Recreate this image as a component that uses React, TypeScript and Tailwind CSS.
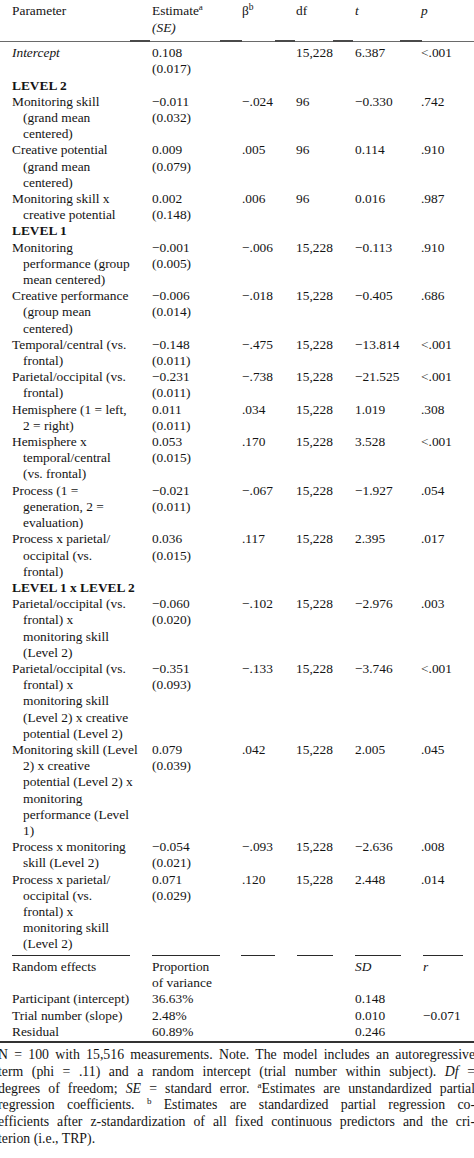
import React from "react";

type Row =
  | { kind: "section"; label: string }
  | {
      kind: "data";
      param: string[];
      italic?: boolean;
      est: string;
      se: string;
      beta: string;
      df: string;
      t: string;
      p: string;
    };

const M = "\u2212";

const rows: Row[] = [
  { kind: "data", param: ["Intercept"], italic: true, est: "0.108", se: "(0.017)", beta: "", df: "15,228", t: "6.387", p: "<.001" },
  { kind: "section", label: "LEVEL 2" },
  { kind: "data", param: ["Monitoring skill", "(grand mean", "centered)"], est: `${M}0.011`, se: "(0.032)", beta: `${M}.024`, df: "96", t: `${M}0.330`, p: ".742" },
  { kind: "data", param: ["Creative potential", "(grand mean", "centered)"], est: "0.009", se: "(0.079)", beta: ".005", df: "96", t: "0.114", p: ".910" },
  { kind: "data", param: ["Monitoring skill x", "creative potential"], est: "0.002", se: "(0.148)", beta: ".006", df: "96", t: "0.016", p: ".987" },
  { kind: "section", label: "LEVEL 1" },
  { kind: "data", param: ["Monitoring", "performance (group", "mean centered)"], est: `${M}0.001`, se: "(0.005)", beta: `${M}.006`, df: "15,228", t: `${M}0.113`, p: ".910" },
  { kind: "data", param: ["Creative performance", "(group mean", "centered)"], est: `${M}0.006`, se: "(0.014)", beta: `${M}.018`, df: "15,228", t: `${M}0.405`, p: ".686" },
  { kind: "data", param: ["Temporal/central (vs.", "frontal)"], est: `${M}0.148`, se: "(0.011)", beta: `${M}.475`, df: "15,228", t: `${M}13.814`, p: "<.001" },
  { kind: "data", param: ["Parietal/occipital (vs.", "frontal)"], est: `${M}0.231`, se: "(0.011)", beta: `${M}.738`, df: "15,228", t: `${M}21.525`, p: "<.001" },
  { kind: "data", param: ["Hemisphere (1 = left,", "2 = right)"], est: "0.011", se: "(0.011)", beta: ".034", df: "15,228", t: "1.019", p: ".308" },
  { kind: "data", param: ["Hemisphere x", "temporal/central", "(vs. frontal)"], est: "0.053", se: "(0.015)", beta: ".170", df: "15,228", t: "3.528", p: "<.001" },
  { kind: "data", param: ["Process (1 =", "generation, 2 =", "evaluation)"], est: `${M}0.021`, se: "(0.011)", beta: `${M}.067`, df: "15,228", t: `${M}1.927`, p: ".054" },
  { kind: "data", param: ["Process x parietal/", "occipital (vs.", "frontal)"], est: "0.036", se: "(0.015)", beta: ".117", df: "15,228", t: "2.395", p: ".017" },
  { kind: "section", label: "LEVEL 1 x LEVEL 2" },
  { kind: "data", param: ["Parietal/occipital (vs.", "frontal) x", "monitoring skill", "(Level 2)"], est: `${M}0.060`, se: "(0.020)", beta: `${M}.102`, df: "15,228", t: `${M}2.976`, p: ".003" },
  { kind: "data", param: ["Parietal/occipital (vs.", "frontal) x", "monitoring skill", "(Level 2) x creative", "potential (Level 2)"], est: `${M}0.351`, se: "(0.093)", beta: `${M}.133`, df: "15,228", t: `${M}3.746`, p: "<.001" },
  { kind: "data", param: ["Monitoring skill (Level", "2) x creative", "potential (Level 2) x", "monitoring", "performance (Level", "1)"], est: "0.079", se: "(0.039)", beta: ".042", df: "15,228", t: "2.005", p: ".045" },
  { kind: "data", param: ["Process x monitoring", "skill (Level 2)"], est: `${M}0.054`, se: "(0.021)", beta: `${M}.093`, df: "15,228", t: `${M}2.636`, p: ".008" },
  { kind: "data", param: ["Process x parietal/", "occipital (vs.", "frontal) x", "monitoring skill", "(Level 2)"], est: "0.071", se: "(0.029)", beta: ".120", df: "15,228", t: "2.448", p: ".014" },
];

const grid = "grid grid-cols-[140px_90px_54px_59px_66px_1fr] pl-[12px]";

function Lines({ lines, italic }: { lines: string[]; italic?: boolean }) {
  return (
    <div className={italic ? "italic" : ""}>
      {lines.map((l, i) => (
        <div key={i} className={`whitespace-nowrap ${i > 0 ? "pl-[11px]" : ""}`}>
          {l}
        </div>
      ))}
    </div>
  );
}

export default function App() {
  const headerSegs: [number, boolean][] = [
    [130, false],
    [20, true],
    [70, false],
    [22, true],
    [33, false],
    [20, true],
    [38, false],
    [20, true],
    [47, false],
    [22, true],
    [52, false],
  ];
  const bottomSegs = [118, 68, 34, 36, 46, 40];
  const segOffsets = [0, 0, -1, 1, 0, 2];

  return (
    <div
      className="w-[474px] min-h-[1158px] overflow-hidden bg-white text-[#141414]"
      style={{ fontFamily: '"Liberation Serif", "Times New Roman", serif' }}
    >
      <div className="text-[13.4px] leading-[16.2px] pt-[3px]">
        {/* Header */}
        <div className={grid}>
          <div>Parameter</div>
          <div>
            <div>
              Estimate<span className="text-[9px] leading-none align-[5px]">a</span>
            </div>
            <div className="italic leading-[17px]">(SE)</div>
          </div>
          <div>
            β<span className="text-[9.5px] leading-none align-[5px]">b</span>
          </div>
          <div>df</div>
          <div className="italic">t</div>
          <div className="italic">p</div>
        </div>
        {/* header rule */}
        <div className="flex items-center h-[2px] mt-[4px]">
          {headerSegs.map(([w, dark], i) => (
            <div
              key={i}
              style={{ width: w }}
              className={dark ? "h-[2px] bg-[#4a4a4a]" : "h-[1px] bg-[#6a6a6a]"}
            />
          ))}
        </div>
        <div className="pt-[3px]">
          {rows.map((r, i) =>
            r.kind === "section" ? (
              <div key={i} className={grid}>
                <div className="font-bold whitespace-nowrap col-span-6">{r.label}</div>
              </div>
            ) : (
              <div key={i} className={grid}>
                <Lines lines={r.param} italic={r.italic} />
                <div>
                  <div>{r.est}</div>
                  <div>{r.se}</div>
                </div>
                <div>{r.beta}</div>
                <div>{r.df}</div>
                <div>{r.t}</div>
                <div>{r.p}</div>
              </div>
            )
          )}
        </div>
        {/* segmented rule */}
        <div className={`${grid} mt-[2px] mb-[3px]`}>
          {bottomSegs.map((w, i) => (
            <div key={i} style={{ marginLeft: segOffsets[i] }}>
              <div style={{ width: w }} className="h-[1.5px] bg-[#2a2a2a]" />
            </div>
          ))}
        </div>
        {/* random effects */}
        <div className={grid}>
          <div className="whitespace-nowrap">Random effects</div>
          <div>
            <div>Proportion</div>
            <div>of variance</div>
          </div>
          <div />
          <div />
          <div className="italic">SD</div>
          <div className="italic pl-[2px]">r</div>
        </div>
        <div className={grid}>
          <div className="whitespace-nowrap">Participant (intercept)</div>
          <div>36.63%</div>
          <div />
          <div />
          <div>0.148</div>
          <div />
        </div>
        <div className={grid}>
          <div className="whitespace-nowrap">Trial number (slope)</div>
          <div>2.48%</div>
          <div />
          <div />
          <div>0.010</div>
          <div className="pl-[2px]">{M}0.071</div>
        </div>
        <div className={grid}>
          <div>Residual</div>
          <div>60.89%</div>
          <div />
          <div />
          <div>0.246</div>
          <div />
        </div>
        <div className="h-[2px] bg-[#333] mt-[1px]" />
      </div>
      {/* footnote */}
      <div className="w-[477px] ml-[-2px] mt-[4px] text-[13.8px] leading-[16.8px] text-justify">
        <div className="[text-align-last:justify]">
          N = 100 with 15,516 measurements. Note. The model includes an autoregressive
        </div>
        <div className="[text-align-last:justify]">
          term (phi = .11) and a random intercept (trial number within subject). <i>Df</i> =
        </div>
        <div className="[text-align-last:justify]">
          degrees of freedom; <i>SE</i> = standard error.{" "}
          <span className="text-[9px] leading-none align-[5px]">a</span>Estimates are unstandardized partial
        </div>
        <div className="[text-align-last:justify]">
          regression coefficients. <span className="text-[9px] leading-none align-[5px]">b</span> Estimates are
          standardized partial regression co-
        </div>
        <div className="[text-align-last:justify]">
          efficients after z-standardization of all fixed continuous predictors and the cri-
        </div>
        <div>terion (i.e., TRP).</div>
      </div>
    </div>
  );
}
